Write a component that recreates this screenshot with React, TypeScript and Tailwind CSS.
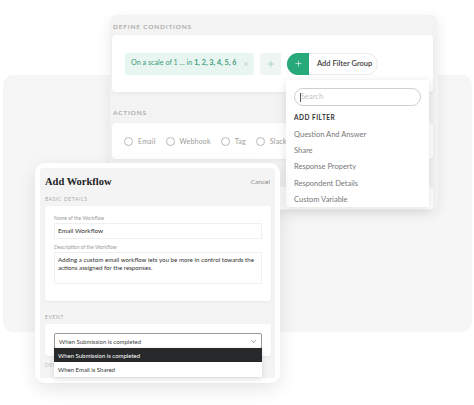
import React from 'react';
import { Plus, X, ChevronDown } from 'lucide-react';

const sans = { fontFamily: 'Lato, "Noto Sans", sans-serif' };

const Radio = ({ label }: { label: string }) => (
    <div className="flex items-center gap-[5px]">
        <span className="w-[9px] h-[9px] rounded-full border border-[#b9b9b9] bg-white" />
        <span className="text-[7px] text-[#9a9a9a] tracking-[0.2px]">{label}</span>
    </div>
);

const filterItems = ['Question And Answer', 'Share', 'Response Property', 'Respondent Details', 'Custom Variable'];

export default function App() {
    return (
        <div className="relative w-[474px] h-[405px] overflow-hidden bg-white" style={sans}>
            {/* back slab */}
            <div className="absolute left-[3px] top-[75px] w-[469px] h-[257px] rounded-[10px] bg-[#f6f6f6]" />

            {/* Conditions panel */}
            <div className="absolute left-[110px] top-[15px] w-[328px] h-[195px] rounded-[8px] bg-[#f3f3f3] shadow-[0_4px_14px_rgba(0,0,0,0.08)] px-[2px] pt-[6px]">
                <p className="text-[6.5px] tracking-[0.8px] text-[#a4a4a4] font-semibold pl-[1px] h-[12px] leading-[12px]">DEFINE CONDITIONS</p>
                <div className="mt-[2px] w-[321px] h-[57px] bg-white rounded-[4px] shadow-[0_1px_4px_rgba(0,0,0,0.05)] flex items-center pl-[13px] gap-[6px]">
                    <div className="h-[22px] w-[129px] bg-[#e9f5f0] rounded-[2px] flex items-center pl-[6px] gap-[6px] text-[7.2px] text-[#3a9d77]">
                        <span>On a scale of 1 ... in <b className="font-bold">1, 2, 3, 4, 5, 6</b></span>
                        <X size={8} strokeWidth={1.5} className="text-[#8fbfae]" />
                    </div>
                    <div className="h-[22px] w-[21px] bg-[#eef5f2] rounded-[2px] flex items-center justify-center">
                        <Plus size={10} strokeWidth={1.3} className="text-[#7cc0a6]" />
                    </div>
                    <div className="h-[22px] w-[91px] rounded-full border border-[#ececec] flex items-center bg-white">
                        <div className="h-[22px] w-[22px] -ml-px rounded-l-full bg-[#27a979] flex items-center justify-center">
                            <Plus size={9} strokeWidth={1.6} className="text-white" />
                        </div>
                        <span className="ml-[8px] text-[7.5px] text-[#3b3b3b] font-semibold">Add Filter Group</span>
                    </div>
                </div>
                <p className="mt-[15px] text-[6.5px] tracking-[0.8px] text-[#a4a4a4] font-semibold pl-[1px] h-[12px] leading-[12px]">ACTIONS</p>
                <div className="mt-[4px] w-[321px] h-[36px] bg-white rounded-[4px] shadow-[0_1px_4px_rgba(0,0,0,0.05)] flex items-center pl-[12px] gap-[10px]">
                    <Radio label="Email" />
                    <Radio label="Webhook" />
                    <Radio label="Tag" />
                    <Radio label="Slack" />
                </div>
                <div className="mt-[28px] w-[321px] h-[22px] bg-white rounded-[4px]" />
            </div>

            {/* Filter dropdown */}
            <div className="absolute left-[286px] top-[80px] w-[143px] h-[127px] bg-white rounded-[2px] shadow-[0_2px_10px_rgba(0,0,0,0.12)] px-[8px] pt-[8px]">
                <div className="h-[18px] rounded-full border border-[#cfcfcf] flex items-center pl-[5px]">
                    <span className="w-px h-[9px] bg-[#555]" />
                    <span className="text-[7.5px] text-[#c4c4c4]">Search</span>
                </div>
                <p className="mt-[7px] text-[6.5px] font-bold tracking-[0.5px] text-[#333]">ADD FILTER</p>
                <div className="mt-[4px] flex flex-col">
                    {filterItems.map((item) => (
                        <span key={item} className="h-[16.3px] leading-[16px] text-[7.5px] text-[#777]">{item}</span>
                    ))}
                </div>
            </div>

            {/* Add Workflow modal */}
            <div className="absolute left-[35px] top-[163px] w-[245px] h-[220px] rounded-[10px] bg-white p-[5px] shadow-[0_6px_18px_rgba(0,0,0,0.10)]">
                <div className="w-full h-full bg-[#f4f4f4] rounded-t-[3px] px-[5px] overflow-hidden">
                    <div className="flex items-center justify-between h-[26px] pt-[2px]">
                        <h2 className="text-[10.5px] font-bold text-[#222]" style={{ fontFamily: '"Liberation Serif", "DejaVu Serif", serif' }}>Add Workflow</h2>
                        <span className="text-[6.5px] text-[#8a8a8a] pr-[0px]">Cancel</span>
                    </div>
                    <p className="text-[5px] tracking-[0.6px] text-[#aaa] h-[10px] leading-[10px]">BASIC DETAILS</p>
                    <div className="mt-[2px] w-[226px] h-[95px] bg-white rounded-[3px] shadow-[0_1px_3px_rgba(0,0,0,0.05)] px-[9px] pt-[8px]">
                        <p className="text-[5px] text-[#999] h-[9px] leading-[9px]">Name of the Workflow</p>
                        <div className="h-[16px] border border-[#f0f0f0] flex items-center pl-[3px] text-[6.5px] text-[#333]">Email Workflow</div>
                        <p className="mt-[4px] text-[5px] text-[#999] h-[9px] leading-[9px]">Description of the Workflow</p>
                        <div className="h-[32px] border border-[#f0f0f0] px-[3px] pt-[3px] text-[6.2px] leading-[8px] text-[#333]">
                            Adding a custom email workflow lets you be more in control towards the actions assigned for the responses.
                        </div>
                    </div>
                    <p className="mt-[11px] text-[5px] tracking-[0.6px] text-[#aaa] h-[10px] leading-[10px]">EVENT</p>
                    <div className="mt-[2px] w-[226px] h-[32px] bg-white rounded-[3px] shadow-[0_1px_3px_rgba(0,0,0,0.05)] px-[9px] pt-[9px]">
                        <div className="h-[16px] border border-[#9a9a9a] rounded-[2px] flex items-center justify-between pl-[4px] pr-[4px] text-[6px] text-[#444]">
                            <span>When Submission is completed</span>
                            <ChevronDown size={7} strokeWidth={2} className="text-[#444]" />
                        </div>
                    </div>
                    <p className="mt-[4px] text-[5px] tracking-[0.6px] text-[#bbb] h-[10px] leading-[10px]">DEF</p>
                </div>
                {/* event options list */}
                <div className="absolute left-[19px] top-[185px] w-[208px] shadow-[0_2px_6px_rgba(0,0,0,0.12)]">
                    <div className="h-[14px] bg-[#28292b] flex items-center pl-[4px] text-[6px] text-white">When Submission is completed</div>
                    <div className="h-[15px] bg-white flex items-center pl-[4px] text-[6px] text-[#333]">When Email is Shared</div>
                </div>
            </div>
        </div>
    );
}
